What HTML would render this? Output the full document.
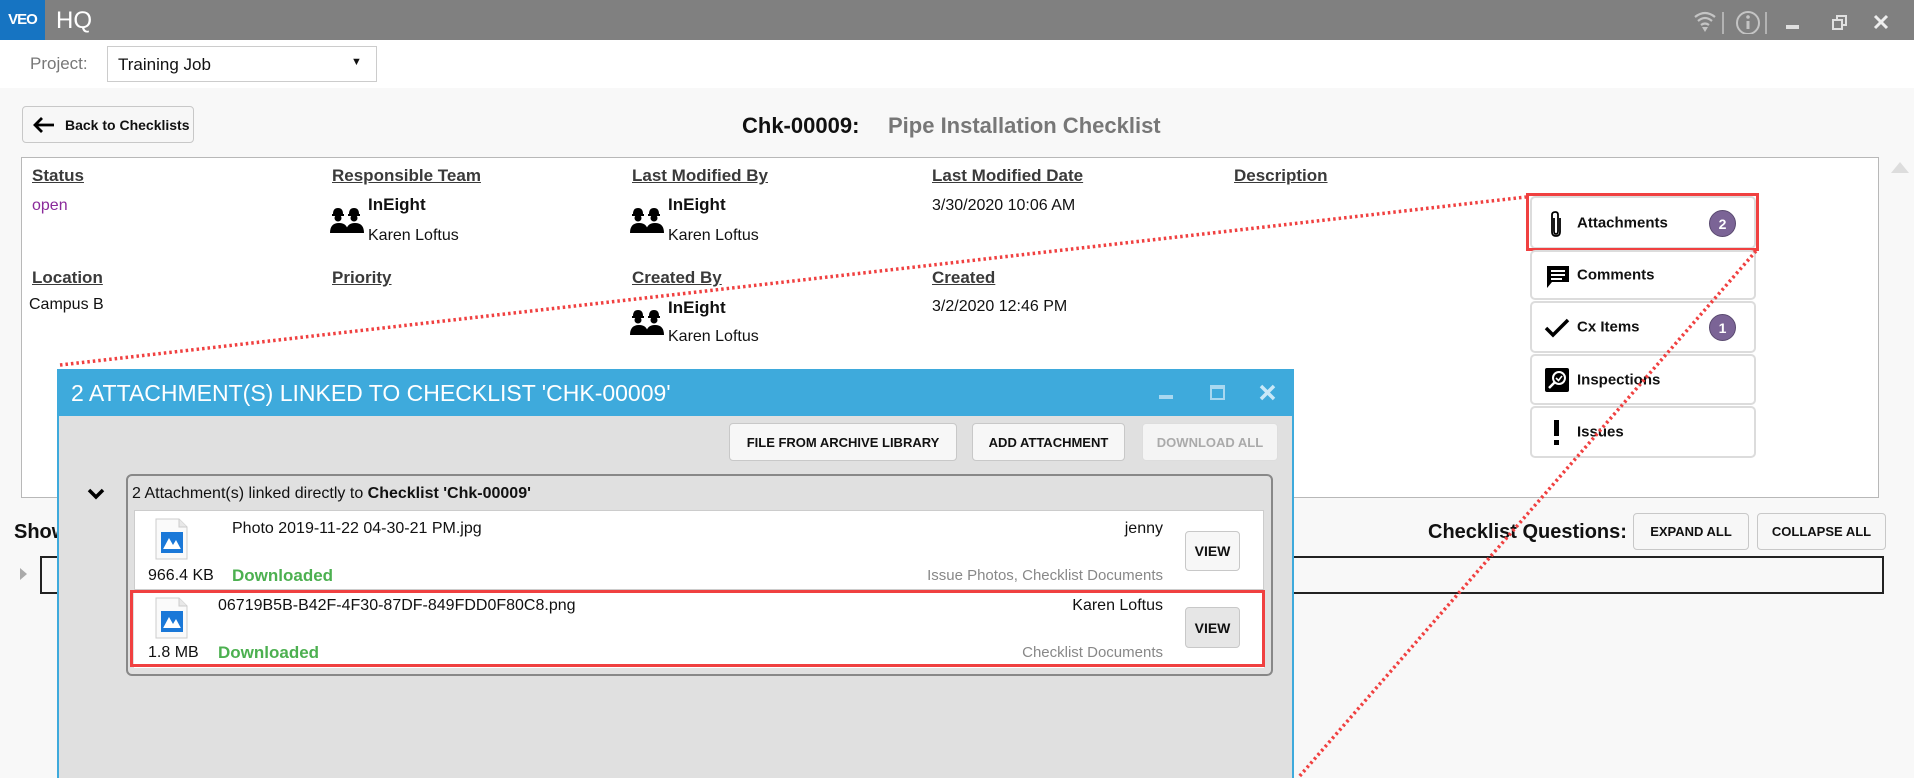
<!DOCTYPE html>
<html><head><meta charset="utf-8"><style>
*{box-sizing:border-box;margin:0;padding:0}
body{width:1914px;height:778px;overflow:hidden;background:#f8f8f8;font-family:"Liberation Sans",sans-serif;color:#111;position:relative}
.a{position:absolute;white-space:nowrap}
.h{font-weight:bold;text-decoration:underline;color:#3a3a3a;font-size:17px}
.v{font-size:16px}
.b{font-weight:bold;font-size:17px}
.btn{position:absolute;background:#f7f7f7;border:1px solid #c8c8c8;border-radius:4px;font-weight:bold;font-size:13px;display:flex;align-items:center;justify-content:center;white-space:nowrap}
.side{position:absolute;left:1530px;width:226px;background:#fff;border:2px solid #dcdcdc;border-radius:5px;font-weight:bold;font-size:15px}
.side span.t{position:absolute;left:45px;top:50%;transform:translateY(-50%)}
.badge{position:absolute;right:18px;top:50%;margin-top:-13px;width:27px;height:27px;border-radius:50%;background:#7b6496;color:#fff;font-size:14px;font-weight:bold;text-align:center;line-height:27px;border:1px solid #5a4a70}
</style></head><body>
<!-- titlebar -->
<div class="a" style="left:0;top:0;width:1914px;height:40px;background:#808080"></div>
<div class="a" style="left:0;top:0;width:45px;height:40px;background:#1674c2;color:#fff;font-weight:bold;font-size:15px;line-height:40px;text-align:center;letter-spacing:-1px">VEO</div>
<div class="a" style="left:56px;top:8px;color:#fff;font-size:24px;line-height:26px">HQ</div>
<svg class="a" style="left:1690px;top:6px" width="224" height="28" viewBox="0 0 224 28">
<g fill="none" stroke="#c4c4c4" stroke-width="2.2"><path d="M5 11 Q15 3 25 11"/><path d="M8 15 Q15 9 22 15"/><path d="M11 19 Q15 16 19 19"/></g>
<path d="M12 21 L18 21 L15 26Z" fill="#c4c4c4"/>
<line x1="33" y1="6" x2="33" y2="28" stroke="#c4c4c4" stroke-width="1.5"/>
<circle cx="58" cy="17" r="11" fill="none" stroke="#c4c4c4" stroke-width="2"/>
<rect x="56.5" y="15" width="3" height="8" fill="#c4c4c4"/><circle cx="58" cy="11" r="1.8" fill="#c4c4c4"/>
<line x1="76" y1="6" x2="76" y2="28" stroke="#c4c4c4" stroke-width="1.5"/>
<rect x="96" y="19" width="13" height="4" fill="#e0e0e0"/>
<rect x="147" y="10" width="9" height="9" fill="none" stroke="#e0e0e0" stroke-width="2"/>
<rect x="143" y="14" width="9" height="9" fill="#808080" stroke="#e0e0e0" stroke-width="2"/>
<path d="M185 10 L197 22 M197 10 L185 22" stroke="#eee" stroke-width="3"/>
</svg>
<!-- project row -->
<div class="a" style="left:0;top:40px;width:1914px;height:48px;background:#fff"></div>
<div class="a" style="left:30px;top:54px;font-size:17px;color:#777">Project:</div>
<div class="a" style="left:107px;top:46px;width:270px;height:36px;border:1px solid #ccc;background:#fff"></div>
<div class="a" style="left:118px;top:55px;font-size:17px">Training Job</div>
<div class="a" style="left:351px;top:56px;font-size:11px">▼</div>
<!-- back -->
<div class="btn" style="left:22px;top:106px;width:172px;height:37px;font-size:14px;justify-content:flex-start;padding-left:10px"><svg width="22" height="16" style="margin-right:10px"><path d="M2 8 H21 M9 1 L2 8 L9 15" fill="none" stroke="#000" stroke-width="2.8"/></svg>Back to Checklists</div>
<div class="a" style="left:742px;top:113px;font-size:22px;font-weight:bold">Chk-00009:</div>
<div class="a" style="left:888px;top:113px;font-size:22px;font-weight:bold;color:#777">Pipe Installation Checklist</div>
<!-- panel -->
<div class="a" style="left:21px;top:157px;width:1858px;height:341px;background:#fff;border:1px solid #b8b8b8"></div>
<div class="a" style="left:1891px;top:162px;width:0;height:0;border-left:9px solid transparent;border-right:9px solid transparent;border-bottom:11px solid #ddd"></div>
<div class="a h" style="left:32px;top:166px">Status</div>
<div class="a v" style="left:32px;top:197px;color:#8a2a9a">open</div>
<div class="a h" style="left:332px;top:166px">Responsible Team</div>
<div class="a h" style="left:632px;top:166px">Last Modified By</div>
<div class="a h" style="left:932px;top:166px">Last Modified Date</div>
<div class="a v" style="left:932px;top:197px">3/30/2020 10:06 AM</div>
<div class="a h" style="left:1234px;top:166px">Description</div>
<div class="a h" style="left:32px;top:268px">Location</div>
<div class="a v" style="left:29px;top:296px">Campus B</div>
<div class="a h" style="left:332px;top:268px">Priority</div>
<div class="a h" style="left:632px;top:268px">Created By</div>
<div class="a h" style="left:932px;top:268px">Created</div>
<div class="a v" style="left:932px;top:298px">3/2/2020 12:46 PM</div>
<!-- people -->
<svg width="0" height="0" style="position:absolute"><defs><g id="ppl"><path d="M3 9 Q3 3 8 3 Q13 3 13 9Z"/><rect x="2" y="9" width="12" height="2"/><circle cx="8" cy="13" r="3.5"/><path d="M19 9 Q19 3 24 3 Q29 3 29 9Z"/><rect x="18" y="9" width="12" height="2"/><circle cx="24" cy="13" r="3.5"/><path d="M0 28 Q0 18 9 18 Q18 18 18 28Z"/><path d="M16 28 Q16 18 25 18 Q34 18 34 28Z"/></g></defs></svg>
<svg class="a" style="left:330px;top:205px" width="34" height="28"><use href="#ppl"/></svg>
<svg class="a" style="left:630px;top:205px" width="34" height="28"><use href="#ppl"/></svg>
<svg class="a" style="left:630px;top:307px" width="34" height="28"><use href="#ppl"/></svg>
<div class="a b" style="left:368px;top:195px">InEight</div><div class="a v" style="left:368px;top:227px">Karen Loftus</div>
<div class="a b" style="left:668px;top:195px">InEight</div><div class="a v" style="left:668px;top:227px">Karen Loftus</div>
<div class="a b" style="left:668px;top:298px">InEight</div><div class="a v" style="left:668px;top:328px">Karen Loftus</div>
<!-- side buttons -->
<div class="side" style="top:196px;height:53px"><svg class="a" style="left:16px;top:12px" width="16" height="28" viewBox="0 0 16 28"><path d="M6 8 V21 Q6 24 8 24 Q10 24 10 21 V5 Q10 2 7.5 2 Q4 2 4 5 V22 Q4 26 8 26 Q12 26 12 22 V8" fill="none" stroke="#000" stroke-width="1.8"/></svg><span class="t">Attachments</span><div class="badge">2</div></div>
<div class="a" style="left:1526px;top:193px;width:233px;height:58px;border:3px solid #f04040"></div>
<div class="side" style="top:250px;height:50px"><svg class="a" style="left:14px;top:13px" width="24" height="24" viewBox="0 0 24 24"><path d="M1 1 H23 V17 H6 L1 23Z" fill="#000"/><path d="M5 6 H19 M5 10 H19 M5 14 H16" stroke="#fff" stroke-width="2"/></svg><span class="t">Comments</span></div>
<div class="side" style="top:301px;height:52px"><svg class="a" style="left:12px;top:14px" width="26" height="22"><path d="M2 11 L9 18 L24 3" fill="none" stroke="#000" stroke-width="3.5"/></svg><span class="t">Cx Items</span><div class="badge">1</div></div>
<div class="side" style="top:354px;height:51px"><svg class="a" style="left:13px;top:12px" width="24" height="24" viewBox="0 0 24 24"><rect width="24" height="24" rx="2" fill="#000"/><circle cx="14" cy="10" r="6" fill="none" stroke="#fff" stroke-width="2"/><path d="M10 14 L4 20" stroke="#fff" stroke-width="2.5"/><path d="M11 10 L13.5 12.5 L17 8" fill="none" stroke="#fff" stroke-width="1.6"/></svg><span class="t">Inspections</span></div>
<div class="side" style="top:406px;height:52px"><div class="a" style="left:22px;top:12px;width:5px;height:16px;background:#000"></div><div class="a" style="left:22px;top:32px;width:5px;height:5px;background:#000"></div><span class="t">Issues</span></div>
<!-- below panel -->
<div class="a" style="left:14px;top:521px;font-size:20px;font-weight:bold">Show</div>
<div class="a" style="left:1428px;top:521px;font-size:20px;font-weight:bold">Checklist Questions:</div>
<div class="btn" style="left:1633px;top:513px;width:116px;height:37px">EXPAND ALL</div>
<div class="btn" style="left:1757px;top:513px;width:129px;height:37px">COLLAPSE ALL</div>
<div class="a" style="left:40px;top:556px;width:1844px;height:38px;border:2px solid #222;background:#f8f8f8"></div>
<div class="a" style="left:20px;top:568px;width:0;height:0;border-top:6px solid transparent;border-bottom:6px solid transparent;border-left:7px solid #aaa"></div>
<!-- dialog -->
<div class="a" style="left:57px;top:369px;width:1237px;height:409px;background:#e0e0e0;border-left:2px solid #3eaadc;border-right:2px solid #3eaadc"></div>
<div class="a" style="left:57px;top:369px;width:1237px;height:47px;background:#3eaadc"></div>
<div class="a" style="left:71px;top:380px;font-size:23px;color:#fff">2 ATTACHMENT(S) LINKED TO CHECKLIST 'CHK-00009'</div>
<svg class="a" style="left:1150px;top:382px" width="135" height="22"><rect x="9" y="13" width="14" height="4" fill="#a8d8f0"/><rect x="61" y="4" width="13" height="13" fill="none" stroke="#a8d8f0" stroke-width="2"/><rect x="61" y="4" width="13" height="3" fill="#a8d8f0"/><path d="M111 4 L124 17 M124 4 L111 17" stroke="#c8e8f8" stroke-width="3.5"/></svg>
<div class="btn" style="left:729px;top:423px;width:228px;height:38px">FILE FROM ARCHIVE LIBRARY</div>
<div class="btn" style="left:972px;top:423px;width:153px;height:38px">ADD ATTACHMENT</div>
<div class="btn" style="left:1142px;top:423px;width:136px;height:38px;color:#aaa;background:#f4f4f4;border-color:#ddd">DOWNLOAD ALL</div>
<svg class="a" style="left:87px;top:487px" width="18" height="14"><path d="M2 3 L9 10 L16 3" fill="none" stroke="#000" stroke-width="3.5"/></svg>
<div class="a" style="left:126px;top:474px;width:1147px;height:202px;border:2px solid #888;border-radius:6px"></div>
<div class="a" style="left:132px;top:485px;font-size:16px">2 Attachment(s) linked directly to <b>Checklist 'Chk-00009'</b></div>
<div class="a" style="left:134px;top:510px;width:1130px;height:80px;background:#fff;border:1px solid #ccc"></div>
<div class="a" style="left:134px;top:592px;width:1130px;height:76px;background:#fff"></div>
<div class="a" style="left:130px;top:590px;width:1135px;height:77px;border:3px solid #f04040"></div>
<svg width="0" height="0" style="position:absolute"><defs><g id="fi"><path d="M1 1 H24 L32 9 V41 H1Z" fill="#fafafa" stroke="#ccc"/><path d="M24 1 V9 H32" fill="#e8e8e8" stroke="#ccc"/><rect x="6" y="14" width="22" height="21" fill="#1a78d8"/><path d="M6 35 L14 20 L18 27 L21 22 L28 35Z" fill="#fff"/><rect x="6" y="31" width="22" height="4" fill="#1a78d8"/></g></defs></svg>
<svg class="a" style="left:155px;top:518px" width="34" height="43"><use href="#fi"/></svg>
<svg class="a" style="left:155px;top:597px" width="34" height="43"><use href="#fi"/></svg>
<div class="a v" style="left:232px;top:520px">Photo 2019-11-22 04-30-21 PM.jpg</div>
<div class="a v" style="left:148px;top:567px">966.4 KB</div>
<div class="a" style="left:232px;top:566px;font-size:17px;font-weight:bold;color:#4cb050">Downloaded</div>
<div class="a v" style="right:751px;top:520px">jenny</div>
<div class="a" style="right:751px;top:567px;font-size:15px;color:#888">Issue Photos, Checklist Documents</div>
<div class="btn" style="left:1185px;top:531px;width:55px;height:40px;font-size:14px">VIEW</div>
<div class="a v" style="left:218px;top:597px">06719B5B-B42F-4F30-87DF-849FDD0F80C8.png</div>
<div class="a v" style="left:148px;top:644px">1.8 MB</div>
<div class="a" style="left:218px;top:643px;font-size:17px;font-weight:bold;color:#4cb050">Downloaded</div>
<div class="a v" style="right:751px;top:597px">Karen Loftus</div>
<div class="a" style="right:751px;top:644px;font-size:15px;color:#888">Checklist Documents</div>
<div class="btn" style="left:1185px;top:607px;width:55px;height:41px;font-size:14px;background:#e6e6e6">VIEW</div>
<!-- dotted lines -->
<svg class="a" style="left:0;top:0" width="1914" height="778"><g stroke="#f04040" stroke-width="3.5" stroke-dasharray="2.5 3" fill="none"><line x1="60" y1="365" x2="1526" y2="197"/><line x1="1756" y1="251" x2="1298" y2="778"/></g></svg>
</body></html>
